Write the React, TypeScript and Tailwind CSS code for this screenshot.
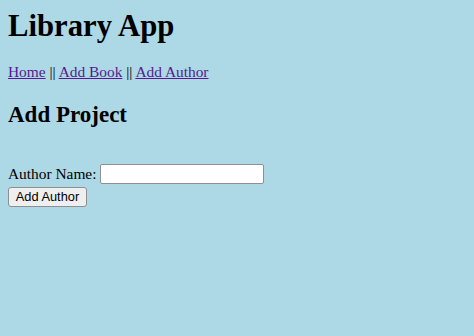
export default function App() {
  return (
    <div className="min-h-screen bg-[#add8e6] px-2 pt-[9px] font-['Liberation_Serif',serif] text-[15.4px] text-black">
      <h1 className="text-[30.7px] font-bold leading-[35px]">Library App</h1>

      <nav className="mt-[19px] leading-[18px]">
        <a href="#" className="text-[#551a8b] underline">Home</a>
        {" || "}
        <a href="#" className="text-[#551a8b] underline">Add Book</a>
        {" || "}
        <a href="#" className="text-[#551a8b] underline">Add Author</a>
      </nav>

      <h2 className="mt-[20px] text-[23px] font-bold leading-[27px]">Add Project</h2>

      <form className="mt-[36px]" onSubmit={(e) => e.preventDefault()}>
        <div className="flex h-[20px] items-center gap-[4px] leading-[18px]">
          <label htmlFor="author">Author Name:</label>
          <input
            id="author"
            type="text"
            className="h-[20px] w-[164px] rounded-[2px] border border-[#8f8f8f] bg-white px-[2px] font-['Liberation_Sans',sans-serif] text-[12.8px]"
          />
        </div>
        <button
          type="submit"
          className="mt-px h-[20px] w-[79px] rounded-[3px] border border-[#8f8f8f] bg-[#efefef] font-['Liberation_Sans',sans-serif] text-[12.8px] leading-none"
        >
          Add Author
        </button>
      </form>
    </div>
  );
}
